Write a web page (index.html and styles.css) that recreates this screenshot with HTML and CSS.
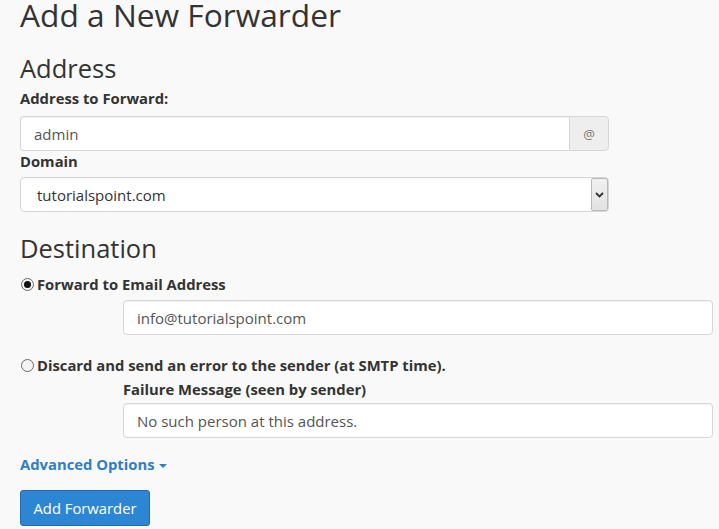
FILE: index.html
```html
<!DOCTYPE html>
<html lang="en">
<head>
<meta charset="utf-8">
<title>Add a New Forwarder</title>
<link rel="stylesheet" href="styles.css">
</head>
<body>
<div class="page">
  <h1 class="title">Add a New Forwarder</h1>

  <section class="address">
    <h2 class="section-title">Address</h2>
    <label class="field-label" for="email">Address to Forward:</label>
    <div class="input-group">
      <input id="email" class="input grouped" type="text" value="admin">
      <span class="addon">@</span>
    </div>
    <label class="field-label" for="domain">Domain</label>
    <div class="select-wrap">
      <select id="domain" class="input select">
        <option>tutorialspoint.com</option>
      </select>
      <span class="select-arrow">
        <svg width="9" height="6" viewBox="0 0 9 6"><path d="M1 1 L4.5 4.5 L8 1" fill="none" stroke="#333" stroke-width="1.8"/></svg>
      </span>
    </div>
  </section>

  <section class="destination">
    <h2 class="section-title dest-title">Destination</h2>
    <label class="radio-row first">
      <input type="radio" name="dest" class="radio" checked>
      <span>Forward to Email Address</span>
    </label>
    <div class="indent">
      <input class="input fwd" type="text" value="info@tutorialspoint.com">
    </div>
    <label class="radio-row second">
      <input type="radio" name="dest" class="radio">
      <span>Discard and send an error to the sender (at SMTP time).</span>
    </label>
    <div class="indent">
      <label class="field-label fail-label">Failure Message (seen by sender)</label>
      <input class="input fail" type="text" value="No such person at this address.">
    </div>
  </section>

  <a class="advanced" href="#">Advanced Options <span class="caret"></span></a>
  <div class="actions">
    <button class="btn" type="button">Add Forwarder</button>
  </div>
</div>
</body>
</html>
```
FILE: styles.css
```css
html, body {
  margin: 0;
  padding: 0;
  background: #f9f9f9;
}
body {
  font-family: "Open Sans", "DejaVu Sans", sans-serif;
  color: #333;
  font-size: 15px;
}
.page {
  padding: 0 6px 0 20px;
}
.title {
  margin: 0;
  font-size: 31.7px;
  line-height: 30px;
  font-weight: 400;
  color: #333;
}
.section-title {
  margin: 24px 0 0;
  font-size: 25.5px;
  line-height: 28px;
  font-weight: 400;
  color: #333;
}
.dest-title {
  margin-top: 22px;
}
.address {
  width: 589px;
}
.field-label {
  display: block;
  margin-top: 6px;
  font-size: 14.8px;
  line-height: 20px;
  font-weight: 700;
  color: #333;
}
.input-group + .field-label {
  margin-top: 0;
}
.input-group {
  display: flex;
  margin-top: 8px;
  height: 35px;
}
.input {
  box-sizing: border-box;
  height: 35px;
  border: 1px solid #d6d6d6;
  border-radius: 4px;
  background: #fff;
  font-family: "Open Sans", "DejaVu Sans", sans-serif;
  font-size: 15px;
  color: #555;
  padding: 0 13px;
  outline: none;
  box-shadow: inset 0 1px 1px rgba(0,0,0,0.05);
}
.grouped {
  flex: 1;
  border-radius: 4px 0 0 4px;
  border-right: 0;
  min-width: 0;
}
.addon {
  width: 40px;
  box-sizing: border-box;
  border: 1px solid #d6d6d6;
  border-radius: 0 4px 4px 0;
  background: #eee;
  color: #777;
  font-size: 13px;
  display: flex;
  align-items: center;
  justify-content: center;
}
.select-wrap {
  position: relative;
  margin-top: 6px;
}
.select {
  display: block;
  width: 100%;
  -webkit-appearance: none;
  appearance: none;
  padding-left: 16px;
  color: #333;
}
.select-arrow {
  position: absolute;
  top: 1px;
  right: 1px;
  width: 17px;
  height: 33px;
  box-sizing: border-box;
  border: 1px solid #b9b9b9;
  border-radius: 2px;
  background: linear-gradient(#f0f0f0, #e2e2e2);
  display: flex;
  align-items: center;
  justify-content: center;
  pointer-events: none;
}
.radio-row {
  display: flex;
  align-items: center;
  gap: 3px;
  font-size: 14.8px;
  line-height: 20px;
  font-weight: 700;
  color: #333;
}
.radio-row.first {
  margin-top: 12px;
}
.radio-row.second {
  margin-top: 20px;
}
.radio {
  -webkit-appearance: none;
  appearance: none;
  margin: 0 0 0 1px;
  width: 13px;
  height: 13px;
  box-sizing: border-box;
  border: 1px solid #6b6b6b;
  border-radius: 50%;
  background: #f4f4f4;
  position: relative;
  flex: none;
}
.radio:checked::after {
  content: "";
  position: absolute;
  left: 2px;
  top: 2px;
  width: 7px;
  height: 7px;
  border-radius: 50%;
  background: #111;
}
.indent {
  margin-left: 103px;
}
.fwd {
  display: block;
  width: 100%;
  margin-top: 6px;
}
.fail-label {
  margin-top: 4px;
}
.fail {
  display: block;
  width: 100%;
  margin-top: 4px;
}
.advanced {
  display: inline-block;
  margin-top: 16px;
  font-size: 14.8px;
  line-height: 20px;
  font-weight: 700;
  color: #2f7ec5;
  text-decoration: none;
}
.caret {
  display: inline-block;
  width: 0;
  height: 0;
  margin-left: 1px;
  vertical-align: middle;
  border-top: 4px solid #2f7ec5;
  border-left: 4px solid transparent;
  border-right: 4px solid transparent;
}
.actions {
  margin-top: 16px;
}
.btn {
  height: 36px;
  width: 130px;
  box-sizing: border-box;
  border: 1px solid #1f6cb1;
  border-radius: 3px;
  background: #2d86d4;
  color: #fff;
  font-family: "Open Sans", "DejaVu Sans", sans-serif;
  font-size: 14.8px;
  padding: 0;
  white-space: nowrap;
  text-align: center;
}
```
